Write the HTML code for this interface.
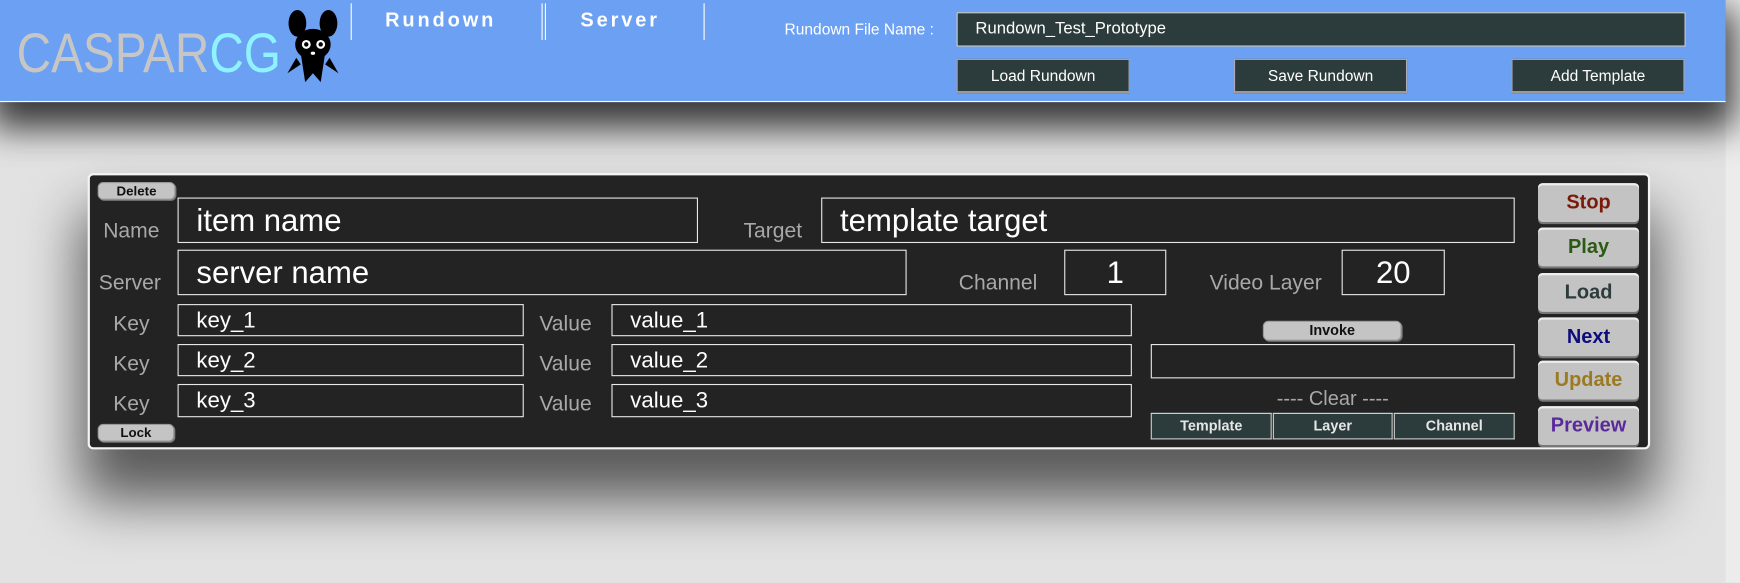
<!DOCTYPE html>
<html><head><meta charset="utf-8"><style>
html,body{margin:0;padding:0;width:1740px;height:582px;overflow:hidden;background:#e2e2e2;font-family:"Liberation Sans",sans-serif}
#w{position:absolute;left:0;top:0;width:1568px;height:525px;transform:scale(1.1097);transform-origin:0 0}
.a{position:absolute}
#hdr{left:0;top:0;width:1555px;height:91px;background:#6ba0f2;border-bottom:1px solid #fff;box-shadow:0 16px 30px 8px rgba(0,0,0,.75)}
#sb{left:1555px;top:0;width:13px;height:525px;background:#ececec}
.sep{width:1px;height:33px;top:3px;background:#fff}
.nav{top:8px;color:#fff;font-weight:bold;font-size:18px;letter-spacing:2.6px}
.hin{background:#2c3b3b;border:1px solid #cfd6d6;color:#fff;font-size:15px;box-sizing:border-box}
.hb{background:#2c3b3b;border:1px solid #aab;border-bottom:2px solid #999;color:#fff;font-size:14px;text-align:center;line-height:28px;box-sizing:border-box;height:31px;width:156px;top:53px}
#pan{left:79px;top:156px;width:1404px;height:245px;background:#232323;border:2px solid #f4f4f4;border-radius:5px;box-shadow:0 40px 50px 6px rgba(0,0,0,.6)}
.in{border:1px solid #e8e8e8;box-sizing:border-box;color:#fff;font-family:"Liberation Sans",sans-serif}
.lb{color:#a8a8a8;font-size:19px}
.sm{background:#c4c4c4;border:1px solid #999;border-radius:5px;box-shadow:1px 1px 0 #777;font-weight:bold;font-size:12px;text-align:center;color:#111;box-sizing:border-box}
.rb{left:1386px;width:91px;height:35px;background:#c3c3c3;border-radius:4px;box-shadow:inset 0 2px 0 #eee,0 2px 0 #777;font-weight:bold;font-size:18px;text-align:center;line-height:35px;box-sizing:border-box}
.cb{top:372px;height:24px;background:#2c3b3b;border:1px solid #ccc;border-top:1px solid #ddd;color:#e6e6e6;font-weight:bold;font-size:13px;text-align:center;line-height:22px;box-sizing:border-box}
</style></head><body><div id="w">
<div id="sb" class="a"></div>
<div id="hdr" class="a">
 <div class="a" style="left:15px;top:23px;font-size:50px;line-height:50px;transform:scaleX(0.86);transform-origin:0 0;white-space:nowrap"><span style="color:#c6c6c6">CASPAR</span><span style="color:#8ff3ff">CG</span></div>
 <svg class="a" style="left:257px;top:8px" width="50" height="66" viewBox="0 0 50 66">
  <ellipse cx="11" cy="13" rx="8" ry="12" fill="#000"/><ellipse cx="39" cy="13" rx="8" ry="12" fill="#000"/>
  <ellipse cx="25" cy="32" rx="16" ry="14" fill="#000"/>
  <path d="M14 40 L18 66 L25 58 L32 66 L36 40 Z" fill="#000"/><path d="M10 44 L2 58 L14 50Z M40 44 L48 58 L36 50Z" fill="#000"/>
  <circle cx="19" cy="32" r="4" fill="#fff"/><circle cx="32" cy="32" r="4" fill="#fff"/>
  <circle cx="19" cy="32" r="2" fill="#000"/><circle cx="32" cy="32" r="2" fill="#000"/>
  <ellipse cx="25" cy="40" rx="2" ry="1.5" fill="#fff"/>
 </svg>
 <div class="a sep" style="left:316px"></div>
 <div class="a sep" style="left:488px"></div><div class="a sep" style="left:491px"></div>
 <div class="a sep" style="left:634px"></div>
 <div class="a nav" style="left:347px">Rundown</div>
 <div class="a nav" style="left:523px">Server</div>
 <div class="a" style="left:707px;top:18px;color:#fff;font-size:14px">Rundown File Name :</div>
 <div class="a hin" style="left:862px;top:11px;width:657px;height:31px;padding:5px 16px">Rundown_Test_Prototype</div>
 <div class="a hb" style="left:862px">Load Rundown</div>
 <div class="a hb" style="left:1112px">Save Rundown</div>
 <div class="a hb" style="left:1362px">Add Template</div>
</div>
<div id="pan" class="a"></div>
<div class="a sm" style="left:88px;top:164px;width:70px;height:16px;line-height:14px">Delete</div>
<div class="a sm" style="left:88px;top:382px;width:69px;height:16px;line-height:14px">Lock</div>
<div class="a lb" style="left:93px;top:198px">Name</div>
<div class="a in" style="left:160px;top:178px;width:469px;height:41px;font-size:28px;padding:4px 16px">item name</div>
<div class="a lb" style="left:670px;top:198px">Target</div>
<div class="a in" style="left:740px;top:178px;width:625px;height:41px;font-size:28px;padding:4px 16px">template target</div>
<div class="a lb" style="left:89px;top:245px">Server</div>
<div class="a in" style="left:160px;top:225px;width:657px;height:41px;font-size:28px;padding:4px 16px">server name</div>
<div class="a lb" style="left:864px;top:245px">Channel</div>
<div class="a in" style="left:959px;top:225px;width:92px;height:41px;font-size:28px;text-align:center;padding-top:4px">1</div>
<div class="a lb" style="left:1090px;top:245px">Video Layer</div>
<div class="a in" style="left:1209px;top:225px;width:93px;height:41px;font-size:28px;text-align:center;padding-top:4px">20</div>
<div class="a lb" style="left:102px;top:282px">Key</div><div class="a in" style="left:160px;top:274px;width:312px;height:29px;font-size:20px;padding:3px 16px">key_1</div>
<div class="a lb" style="left:102px;top:318px">Key</div><div class="a in" style="left:160px;top:310px;width:312px;height:29px;font-size:20px;padding:3px 16px">key_2</div>
<div class="a lb" style="left:102px;top:354px">Key</div><div class="a in" style="left:160px;top:346px;width:312px;height:30px;font-size:20px;padding:3px 16px">key_3</div>
<div class="a lb" style="left:486px;top:282px">Value</div><div class="a in" style="left:551px;top:274px;width:469px;height:29px;font-size:20px;padding:3px 16px">value_1</div>
<div class="a lb" style="left:486px;top:318px">Value</div><div class="a in" style="left:551px;top:310px;width:469px;height:29px;font-size:20px;padding:3px 16px">value_2</div>
<div class="a lb" style="left:486px;top:354px">Value</div><div class="a in" style="left:551px;top:346px;width:469px;height:30px;font-size:20px;padding:3px 16px">value_3</div>
<div class="a sm" style="left:1138px;top:289px;width:125px;height:18px;line-height:16px;font-size:13px">Invoke</div>
<div class="a in" style="left:1037px;top:310px;width:328px;height:31px"></div>
<div class="a lb" style="left:1037px;width:328px;text-align:center;top:349px;font-size:18px">---- Clear ----</div>
<div class="a cb" style="left:1037px;width:109px">Template</div>
<div class="a cb" style="left:1147px;width:108px">Layer</div>
<div class="a cb" style="left:1256px;width:109px">Channel</div>
<div class="a rb" style="top:165px;color:#7a1a0a">Stop</div>
<div class="a rb" style="top:205px;color:#2b5a14">Play</div>
<div class="a rb" style="top:246px;color:#2c3b3b">Load</div>
<div class="a rb" style="top:286px;color:#0c0c7a">Next</div>
<div class="a rb" style="top:325px;color:#9c7a22">Update</div>
<div class="a rb" style="top:366px;color:#5a2a9a">Preview</div>
</div></body></html>
